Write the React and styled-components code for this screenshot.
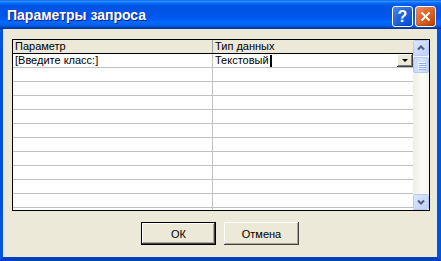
import React from "react"
import styled, { createGlobalStyle } from "styled-components"

const GlobalStyle = createGlobalStyle`
  html, body {
    margin: 0;
    padding: 0;
    background: #ece9d8;
  }
  * {
    box-sizing: border-box;
  }
`

const Window = styled.div`
  width: 441px;
  height: 261px;
  display: flex;
  flex-direction: column;
  font-family: "Liberation Sans", Arial, sans-serif;
  font-size: 11px;
  color: #000;
`

const TitleBar = styled.div`
  height: 29px;
  flex: none;
  display: flex;
  align-items: flex-start;
  padding: 0 5px 0 7px;
  background: linear-gradient(
    to bottom,
    #0058ee 0%,
    #3593ff 4%,
    #288eff 6%,
    #127dff 8%,
    #036ffc 10%,
    #0262ee 14%,
    #0057e5 20%,
    #0054e3 24%,
    #0055eb 56%,
    #005bf5 66%,
    #026afe 76%,
    #0062ef 86%,
    #0052d6 92%,
    #0040ab 96%,
    #003092 100%
  );
`

const Title = styled.div`
  flex: 1;
  padding-top: 7px;
  color: #fff;
  font-family: "Liberation Sans", Arial, sans-serif;
  font-weight: bold;
  font-size: 14px;
  text-shadow: 1px 1px #0f1f8a;
`

const TitleButtons = styled.div`
  display: flex;
  gap: 2px;
  padding-top: 6px;
`

const CapButton = styled.div`
  width: 21px;
  height: 21px;
  border: 1px solid #fff;
  border-radius: 3px;
  display: flex;
  align-items: center;
  justify-content: center;
  color: #fff;
  background: ${(p) =>
    p.$danger
      ? "radial-gradient(circle at 90% 90%, #cc4600 0%, #dc6527 55%, #e9936e 100%)"
      : "radial-gradient(circle at 90% 90%, #0054e9 0%, #2263d5 55%, #4f8cf6 100%)"};
  box-shadow: inset 0 -1px 2px rgba(0, 0, 0, 0.25);
  font-family: "Liberation Sans", Arial, sans-serif;
  font-weight: bold;
  font-size: 16px;
  line-height: 1;
`

const Body = styled.div`
  flex: 1;
  display: flex;
  flex-direction: column;
  background: #ece9d8;
  border-left: 3px solid #0053e1;
  border-right: 4px solid #0053e1;
  border-bottom: 4px solid #0040c0;
  padding: 10px 7px 0 9px;
`

const Grid = styled.div`
  width: 418px;
  height: 172px;
  border: 1px solid #000;
  display: flex;
  background: #fff;
  overflow: hidden;
`

const Table = styled.div`
  width: 400px;
  display: flex;
  flex-direction: column;
`

const Row = styled.div`
  display: grid;
  grid-template-columns: 200px 200px;
  height: 14px;
  flex: none;
  background: ${(p) => (p.$header ? "#ece9d8" : "#fff")};
  border-bottom: 1px solid ${(p) => (p.$header ? "#000" : "#c0c0c0")};
`

const Cell = styled.div`
  display: flex;
  align-items: center;
  padding-left: 2px;
  line-height: 13px;
  white-space: nowrap;
  border-right: 1px solid ${(p) => (p.$header ? "#a0a0a0" : "#c0c0c0")};
  &:last-child {
    border-right: none;
  }
`

const Caret = styled.span`
  width: 2px;
  height: 12px;
  background: #000;
  margin-left: 1px;
`

const DropButton = styled.div`
  margin-left: auto;
  width: 16px;
  height: 13px;
  background: #ece9d8;
  box-shadow: inset -1px -1px #404040, inset 1px 1px #fff, inset -2px -2px #808080;
  display: flex;
  align-items: center;
  justify-content: center;
  &::after {
    content: "";
    border-left: 3px solid transparent;
    border-right: 3px solid transparent;
    border-top: 3px solid #000;
  }
`

const ScrollBar = styled.div`
  width: 16px;
  display: flex;
  flex-direction: column;
  background: linear-gradient(to right, #eeede5, #fcfcfa 60%, #f3f1ea);
`

const ScrollButton = styled.div`
  width: 16px;
  height: 16px;
  flex: none;
  border: 1px solid #fff;
  border-radius: 2px;
  background: linear-gradient(to bottom right, #dbe6fd, #bcd0f8);
  outline: 1px solid #b7cbf6;
  outline-offset: -1px;
  display: flex;
  align-items: center;
  justify-content: center;
  margin-top: ${(p) => (p.$end ? "auto" : "0")};
`

const Thumb = styled.div`
  width: 16px;
  height: 16px;
  margin-top: 1px;
  border-radius: 2px;
  border: 1px solid #b4c8f6;
  background: linear-gradient(to right, #c9d8fc, #d9e4fd 50%, #c2d4fb);
  display: flex;
  flex-direction: column;
  align-items: center;
  justify-content: center;
  gap: 1px;
`

const Grip = styled.div`
  width: 7px;
  height: 1px;
  background: #eef4fe;
  box-shadow: 1px 1px #8caef1;
`

const ButtonRow = styled.div`
  display: flex;
  justify-content: center;
  gap: 8px;
  margin-top: 11px;
  padding-right: 2px;
`

const DialogButton = styled.div`
  width: 75px;
  height: 23px;
  display: flex;
  align-items: center;
  justify-content: center;
  background: #ece9d8;
  font-size: 11px;
  box-shadow: ${(p) =>
    p.$default
      ? "inset 0 0 0 1px #000, inset -2px -2px #404040, inset 2px 2px #fff, inset -3px -3px #aca899"
      : "inset -1px -1px #404040, inset 1px 1px #fff, inset -2px -2px #aca899"};
`

const Chevron = ({ up }) => (
  <svg width="8" height="6" viewBox="0 0 8 6">
    <path
      d={up ? "M1 4.5 L4 1.5 L7 4.5" : "M1 1.5 L4 4.5 L7 1.5"}
      fill="none"
      stroke="#4d6185"
      strokeWidth="2"
    />
  </svg>
)

const CloseIcon = () => (
  <svg width="11" height="11" viewBox="0 0 11 11">
    <path d="M1.5 1.5 L9.5 9.5 M9.5 1.5 L1.5 9.5" stroke="#fff" strokeWidth="2" />
  </svg>
)

const emptyRows = Array.from({ length: 11 })

export default function App() {
  return (
    <Window>
      <GlobalStyle />
      <TitleBar>
        <Title>Параметры запроса</Title>
        <TitleButtons>
          <CapButton>?</CapButton>
          <CapButton $danger>
            <CloseIcon />
          </CapButton>
        </TitleButtons>
      </TitleBar>
      <Body>
        <Grid>
          <Table>
            <Row $header>
              <Cell $header>Параметр</Cell>
              <Cell $header>Тип данных</Cell>
            </Row>
            <Row>
              <Cell>[Введите класс:]</Cell>
              <Cell>
                Текстовый
                <Caret />
                <DropButton />
              </Cell>
            </Row>
            {emptyRows.map((_, i) => (
              <Row key={i}>
                <Cell />
                <Cell />
              </Row>
            ))}
          </Table>
          <ScrollBar>
            <ScrollButton>
              <Chevron up />
            </ScrollButton>
            <Thumb>
              <Grip />
              <Grip />
              <Grip />
              <Grip />
            </Thumb>
            <ScrollButton $end>
              <Chevron />
            </ScrollButton>
          </ScrollBar>
        </Grid>
        <ButtonRow>
          <DialogButton $default>ОК</DialogButton>
          <DialogButton>Отмена</DialogButton>
        </ButtonRow>
      </Body>
    </Window>
  )
}
